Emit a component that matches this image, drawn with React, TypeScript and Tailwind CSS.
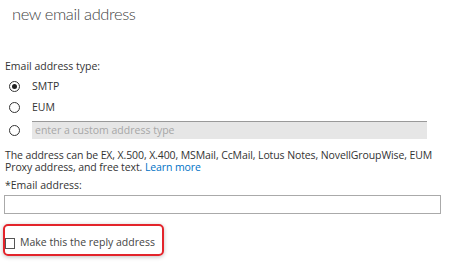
import React, { useState } from "react";

const Radio = ({ checked }: { checked: boolean }) => (
  <span className="w-[11px] h-[11px] rounded-full border border-[#333] flex items-center justify-center bg-white shrink-0">
    {checked && <span className="w-[5px] h-[5px] rounded-full bg-[#222]" />}
  </span>
);

export default function App() {
  const [type] = useState("smtp");

  return (
    <div className="w-[474px] h-[266px] bg-white text-[#333] font-['Open_Sans',sans-serif] overflow-hidden">
      <h1 className="pl-[12px] pt-[3px] text-[16.5px] font-light leading-[22px] tracking-[-0.4px] text-[#444] font-['Lato',sans-serif]">
        new email address
      </h1>

      <div className="pl-[5px] mt-[35px] text-[10.5px] leading-[13px]">
        Email address type:
      </div>

      {/* Address type options */}
      <div className="flex flex-col gap-[8px] mt-[7px] pl-[9px] text-[10.5px]">
        <div className="flex items-center gap-[12px] h-[13px]">
          <Radio checked={type === "smtp"} />
          <span>SMTP</span>
        </div>
        <div className="flex items-center gap-[12px] h-[13px]">
          <Radio checked={type === "eum"} />
          <span>EUM</span>
        </div>
        <div className="flex items-center gap-[12px] h-[18px] -mt-[1px]">
          <Radio checked={type === "custom"} />
          <div className="w-[395px] h-[18px] bg-[#e6e6e6] border-t border-[#999] pl-[3px] flex items-center text-[#a6a6a6]">
            enter a custom address type
          </div>
        </div>
      </div>

      <p className="pl-[5px] mt-[10px] text-[10.5px] leading-[12px] tracking-[-0.1px] text-[#333]">
        The address can be EX, X.500, X.400, MSMail, CcMail, Lotus Notes, NovellGroupWise, EUM
        <br />
        Proxy address, and free text. <span className="text-[#0072c6]">Learn more</span>
      </p>

      <div className="pl-[5px] mt-[6px] text-[10.5px] leading-[13px]">*Email address:</div>
      <div className="ml-[4px] mt-[3px] w-[437px] h-[19px] border border-[#aaa] bg-white" />

      {/* Reply address option, highlighted */}
      <div className="ml-[3px] mt-[10px] w-[161px] h-[32px] rounded-[5px] border-2 border-[#e3242b] shadow-[0_1px_4px_rgba(0,0,0,0.25)] flex items-center gap-[5px] pt-[6px]">
        <span className="w-[10px] h-[11px] border border-[#555] bg-white shrink-0" />
        <span className="text-[10.5px] text-[#444]">Make this the reply address</span>
      </div>
    </div>
  );
}
